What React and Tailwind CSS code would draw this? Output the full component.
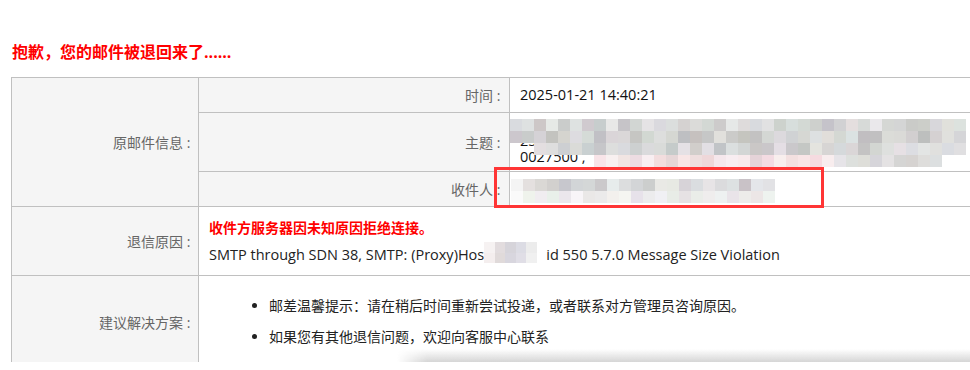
import React from "react";

function makeRng(seed) {
  let s = seed;
  return () => {
    s = (s * 1103515245 + 12345) % 2147483648;
    return s / 2147483648;
  };
}

function rowColors(rng, count, base, spread, tint) {
  const out = [];
  for (let i = 0; i < count; i++) {
    const v = base + Math.round(rng() * spread);
    const t = tint ? tint(i) : [0, 0, 0];
    const j = () => Math.round((rng() - 0.5) * 8);
    const r = Math.min(248, v + t[0] + j());
    const g = Math.min(248, v + t[1] + j());
    const b = Math.min(248, v + t[2] + j());
    out.push(`rgb(${r},${g},${b})`);
  }
  return out;
}

function Mosaic({ rows, cell = 12 }) {
  return (
    <div className="flex flex-col blur-[0.4px]">
      {rows.map((r, i) => (
        <div key={i} className="flex" style={{ paddingLeft: r.offset }}>
          {r.colors.map((c, k) => (
            <div key={k} style={{ width: cell, height: cell, background: c }} />
          ))}
        </div>
      ))}
    </div>
  );
}

const rngA = makeRng(7);
const subjectRows = [
  { offset: 0, colors: rowColors(rngA, 38, 198, 36) },
  { offset: 0, colors: rowColors(rngA, 38, 192, 32) },
  { offset: 24, colors: rowColors(rngA, 36, 196, 32) },
  {
    offset: 84,
    colors: rowColors(rngA, 29, 212, 26, (i) => (i < 20 ? [20, 2, 4] : [0, 0, 0])),
  },
];

const rngB = makeRng(23);
const recipRows = [
  { offset: 0, colors: ["rgb(244,244,244)", ...rowColors(rngB, 21, 198, 36)] },
  { offset: 0, colors: ["rgb(250,250,250)", ...rowColors(rngB, 21, 228, 18)] },
];

const smtpRows = [
  { offset: 0, colors: ["rgb(246,242,242)", "rgb(226,220,222)", "rgb(214,212,218)", "rgb(220,220,228)", "rgb(236,236,236)"] },
  { offset: 0, colors: ["rgb(244,238,238)", "rgb(224,218,218)", "rgb(216,214,222)", "rgb(224,222,230)", "rgb(240,240,240)"] },
];

const Colon = () => <span className="inline-block w-[14px] pr-[3px] text-center">:</span>;

export default function App() {
  return (
    <div className="w-[970px] h-[370px] bg-white overflow-hidden font-['Open_Sans','Noto_Sans_CJK_SC',sans-serif]">
      <div className="relative h-[362px] overflow-hidden">
        <h1 className="pt-[40px] pl-[12px] text-[16px] leading-[24px] font-bold text-[#ff0000]">
          抱歉，您的邮件被退回来了......
        </h1>
        <table className="mt-[13px] ml-[11px] w-[1000px] table-fixed border-collapse text-[14px]">
          <colgroup>
            <col className="w-[187px]" />
            <col className="w-[311px]" />
            <col />
          </colgroup>
          <tbody>
            <tr className="h-[35px]">
              <td rowSpan={3} className="border border-[#c0c0c0] bg-[#f5f5f5] pr-[1px] text-right align-middle text-[#666]">
                原邮件信息<Colon />
              </td>
              <td className="border border-[#c0c0c0] bg-[#f5f5f5] pr-[2px] text-right align-middle text-[#666]">
                时间<Colon />
              </td>
              <td className="border border-[#c0c0c0] bg-white pl-[10px] align-middle text-[14.5px] text-[#111]">
                2025-01-21 14:40:21
              </td>
            </tr>
            <tr className="h-[59px]">
              <td className="border border-[#c0c0c0] bg-[#f5f5f5] pr-[2px] text-right align-middle text-[#666]">
                主题<Colon />
              </td>
              <td className="border border-[#c0c0c0] bg-white p-0 align-top">
                <div className="relative h-[58px] overflow-hidden pl-[10px] pt-[4px] text-[14.5px] leading-[16px] text-[#111]">
                  <div className="whitespace-nowrap pl-[440px]">'</div>
                  <div className="whitespace-nowrap">25<span className="pl-[413px]">c</span></div>
                  <div className="whitespace-nowrap">0027500 ,</div>
                  <div className="absolute left-0 top-[6px]">
                    <Mosaic rows={subjectRows} />
                  </div>
                </div>
              </td>
            </tr>
            <tr className="h-[35px]">
              <td className="border border-[#c0c0c0] bg-[#f5f5f5] pr-[2px] text-right align-middle text-[#666]">
                收件人<Colon />
              </td>
              <td className="border border-[#c0c0c0] bg-white p-0 align-middle">
                <div className="pl-[1px] pt-[3px]">
                  <Mosaic rows={recipRows} />
                </div>
              </td>
            </tr>
            <tr className="h-[69px]">
              <td className="border border-[#c0c0c0] bg-[#f5f5f5] pr-[1px] text-right align-middle text-[#666]">
                退信原因<Colon />
              </td>
              <td colSpan={2} className="border border-[#c0c0c0] bg-white pl-[10px] pt-[11px] align-top">
                <div className="h-[20px] leading-[20px] font-bold text-[#ff0000]">收件方服务器因未知原因拒绝连接。</div>
                <div className="mt-[7px] h-[20px] whitespace-nowrap text-[14.5px] leading-[20px] text-[#222]">
                  SMTP through SDN 38, SMTP: (Proxy)Hos
                  <span className="inline-block h-[20px] w-[62px] align-top">
                    <span className="block -translate-y-[3px]">
                      <Mosaic rows={smtpRows} cell={10.5} />
                    </span>
                  </span>
                  id 550 5.7.0 Message Size Violation
                </div>
              </td>
            </tr>
            <tr className="h-[94px]">
              <td className="border border-[#c0c0c0] bg-[#f5f5f5] pr-[1px] text-right align-middle text-[#666]">
                建议解决方案<Colon />
              </td>
              <td colSpan={2} className="border border-[#c0c0c0] bg-white pl-[10px] pt-[19px] align-top text-[#222]">
                <ul className="list-disc pl-[60px] leading-[21px]">
                  <li className="mb-[10px]">邮差温馨提示：请在稍后时间重新尝试投递，或者联系对方管理员咨询原因。</li>
                  <li>如果您有其他退信问题，欢迎向客服中心联系</li>
                </ul>
              </td>
            </tr>
          </tbody>
        </table>

        <div className="absolute left-[494px] top-[167px] h-[41px] w-[330px] border-[3px] border-[#ff3535]" />
        <div className="absolute bottom-0 left-[397px] right-0 h-[13px] bg-linear-to-b from-white/0 to-[#d6d6d6] [mask-image:linear-gradient(to_right,transparent,black_30px)]" />
      </div>
    </div>
  );
}
